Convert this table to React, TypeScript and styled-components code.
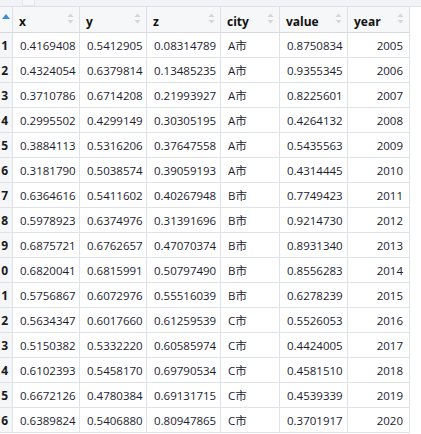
import React from "react";
import styled, { createGlobalStyle } from "styled-components";

const Global = createGlobalStyle`
  html, body { margin: 0; padding: 0; background: #fff; }
  body { font-family: "Open Sans", "Noto Sans CJK SC", sans-serif; }
`;

const COLS = "13px 67px 67px 74px 59px 68px 62px";

const Page = styled.div`
  width: 421px;
  height: 434px;
  overflow: hidden;
  background: #fff;
`;

const TopStrip = styled.div`
  height: 6px;
  background: #f1f3f6;
  border-bottom: 1px solid #dde1e5;
  display: flex;
  padding-left: 22px;
`;

const StripTab = styled.div`
  width: 11px;
  height: 5px;
  border: 1px solid #e3e6ea;
  border-top: none;
  background: #f6f7f9;
`;

const Grid = styled.div`
  display: grid;
  grid-template-columns: ${COLS};
  grid-template-rows: 26px;
  grid-auto-rows: 25px;
  width: 410px;
`;

const HeaderCell = styled.div`
  position: relative;
  box-sizing: border-box;
  background: #f6f7f9;
  border-right: 1px solid #dcdfe3;
  border-bottom: 1px solid #d6dadf;
  display: flex;
  align-items: flex-end;
  padding: 0 0 2px 6px;
  font-weight: 700;
  font-size: 12px;
  color: #111;
  line-height: 16px;
`;

const SortIcon = styled.svg`
  position: absolute;
  right: 5px;
  top: 6px;
`;

const Cell = styled.div<{ $right?: boolean }>`
  box-sizing: border-box;
  border-right: 1px solid #dfe2e6;
  border-bottom: 1px solid #dfe2e6;
  display: flex;
  align-items: center;
  justify-content: ${(p) => (p.$right ? "flex-end" : "flex-start")};
  padding: 0 6px 0 7px;
  font-size: 11.5px;
  color: #1c1c2e;
  white-space: nowrap;
  overflow: hidden;
`;

const NumCell = styled.div`
  box-sizing: border-box;
  background: #f5f6f8;
  border-right: 1px solid #dfe2e6;
  border-bottom: 1px solid #dfe2e6;
  display: flex;
  align-items: center;
  justify-content: flex-end;
  padding-right: 4px;
  font-size: 12px;
  font-weight: 700;
  color: #1a1a1a;
  white-space: nowrap;
  overflow: hidden;
`;

const xs = ["0.4169408","0.4324054","0.3710786","0.2995502","0.3884113","0.3181790","0.6364616","0.5978923","0.6875721","0.6820041","0.5756867","0.5634347","0.5150382","0.6102393","0.6672126","0.6389824"];
const ys = ["0.5412905","0.6379814","0.6714208","0.4299149","0.5316206","0.5038574","0.5411602","0.6374976","0.6762657","0.6815991","0.6072976","0.6017660","0.5332220","0.5458170","0.4780384","0.5406880"];
const zs = ["0.08314789","0.13485235","0.21993927","0.30305195","0.37647558","0.39059193","0.40267948","0.31391696","0.47070374","0.50797490","0.55516039","0.61259539","0.60585974","0.69790534","0.69131715","0.80947865"];
const cities = ["A市","A市","A市","A市","A市","A市","B市","B市","B市","B市","B市","C市","C市","C市","C市","C市"];
const vals = ["0.8750834","0.9355345","0.8225601","0.4264132","0.5435563","0.4314445","0.7749423","0.9214730","0.8931340","0.8556283","0.6278239","0.5526053","0.4424005","0.4581510","0.4539339","0.3701917"];

const Sort = () => (
  <SortIcon width="7" height="11" viewBox="0 0 7 11">
    <path d="M3.5 0.5 L6.5 4 L0.5 4 Z" fill="#d3d6da" />
    <path d="M3.5 10.5 L6.5 7 L0.5 7 Z" fill="#d3d6da" />
  </SortIcon>
);

const UpArrow = styled.svg`
  position: absolute;
  left: 2px;
  top: 7px;
`;

export default function App() {
  const headers = ["x", "y", "z", "city", "value", "year"];
  return (
    <Page>
      <Global />
      <TopStrip>
        <StripTab />
      </TopStrip>
      <Grid>
        <HeaderCell>
          <UpArrow width="8" height="5" viewBox="0 0 8 5">
            <path d="M4 0 L8 5 L0 5 Z" fill="#3b8ed8" />
          </UpArrow>
        </HeaderCell>
        {headers.map((h) => (
          <HeaderCell key={h}>
            {h}
            <Sort />
          </HeaderCell>
        ))}
        {xs.map((x, i) => (
          <React.Fragment key={i}>
            <NumCell>{i + 1}</NumCell>
            <Cell>{x}</Cell>
            <Cell>{ys[i]}</Cell>
            <Cell>{zs[i]}</Cell>
            <Cell>{cities[i]}</Cell>
            <Cell>{vals[i]}</Cell>
            <Cell $right>{2005 + i}</Cell>
          </React.Fragment>
        ))}
      </Grid>
    </Page>
  );
}
